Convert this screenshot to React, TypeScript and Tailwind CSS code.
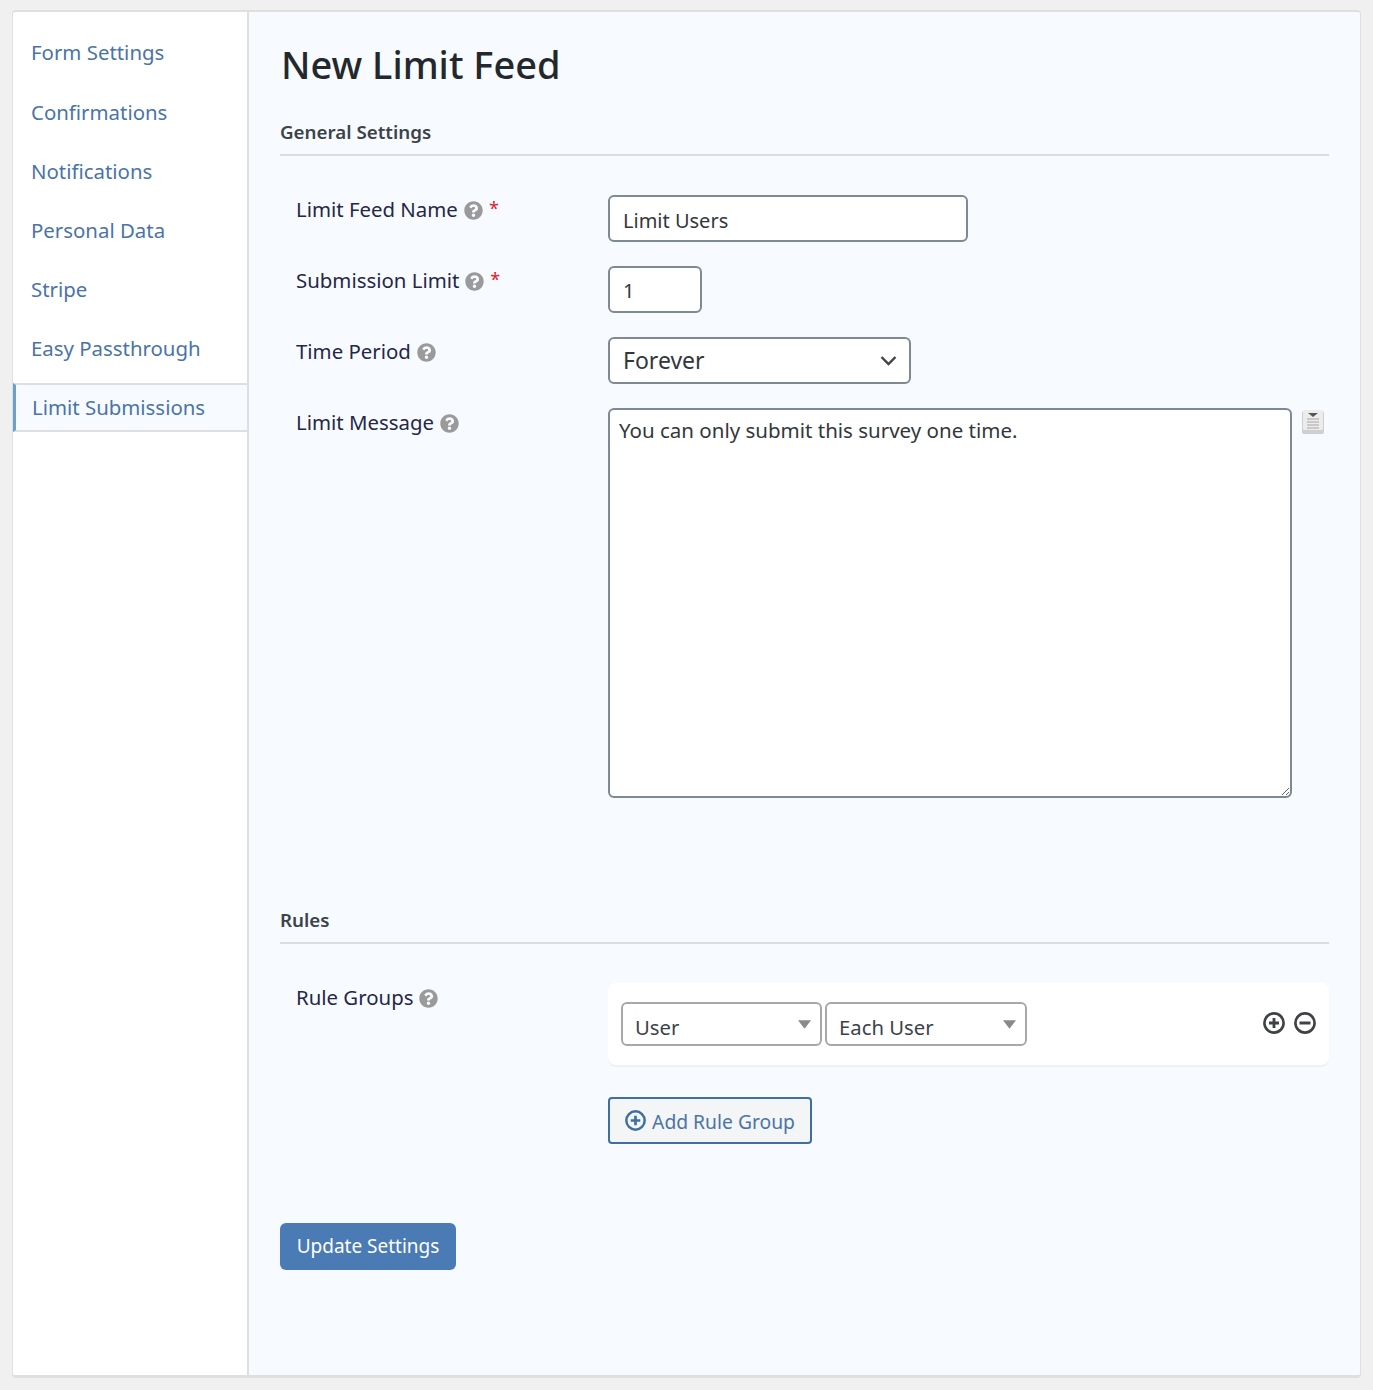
import React from "react";
import { FaQuestionCircle } from "react-icons/fa";

const font = "[font-family:'Noto_Sans','Open_Sans',sans-serif]";

const navItems = ["Form Settings", "Confirmations", "Notifications", "Personal Data", "Stripe", "Easy Passthrough"];

function Label({ text, required }: { text: string; required?: boolean }) {
  return (
    <div className="w-[328px] shrink-0 pl-4 flex items-start text-[20.4px] leading-[28px] text-[#242748]">
      <span>{text}</span>
      <FaQuestionCircle className="ml-[6px] mt-[6px] w-[19px] h-[19px] text-[#9a9a9a]" />
      {required && <span className="ml-[6px] -mt-[1px] text-[18px] text-[#e0202f]">*</span>}
    </div>
  );
}

function PlusCircle({ className }: { className: string }) {
  return (
    <svg viewBox="0 0 22 22" className={className} fill="none" stroke="currentColor">
      <circle cx="11" cy="11" r="9.6" strokeWidth="2.6" />
      <path d="M11 6v10M6 11h10" strokeWidth="2.8" />
    </svg>
  );
}

function MinusCircle({ className }: { className: string }) {
  return (
    <svg viewBox="0 0 22 22" className={className} fill="none" stroke="currentColor">
      <circle cx="11" cy="11" r="9.6" strokeWidth="2.6" />
      <path d="M5.5 11h11" strokeWidth="3" />
    </svg>
  );
}

function RuleSelect({ value, className }: { value: string; className: string }) {
  return (
    <div className={`relative h-[44px] ${className}`}>
      <select
        value={value}
        onChange={() => {}}
        className="w-full h-full appearance-none bg-white border-2 border-[#a8a8a8] rounded-[6px] pl-[12px] pt-[6px] text-[20.3px] text-[#3c434a] outline-none"
      >
        <option>{value}</option>
      </select>
      <svg viewBox="0 0 12 8" className="absolute right-[11px] top-[18px] w-[13px] h-[9px] text-[#8a8a8a]" fill="currentColor">
        <path d="M0 0h12L6 8z" />
      </svg>
    </div>
  );
}

export default function App() {
  return (
    <div className={`min-h-[1390px] bg-[#f0f0f0] pt-[10px] pl-[12px] pr-[12px] pb-[12px] ${font}`}>
      <div className="flex h-[1368px] rounded-[4px] border-t-2 border-b-[3px] border-x border-[#dfdfdf] overflow-hidden">
        <nav className="w-[234px] shrink-0 bg-white text-[20.4px] text-[#4a74a8]">
          {navItems.map((t) => (
            <div key={t} className="mt-[12px] first:mt-[17px] h-[47.2px] flex items-center pl-[18px] leading-none">
              {t}
            </div>
          ))}
          <div className="mt-[11px] h-[49px] flex items-center pl-[16px] border-y-2 border-[#dfdfdf] border-l-[3px] border-l-[#6aa0cb] bg-[#f7fbff]">
            Limit Submissions
          </div>
        </nav>
        <main className="flex-1 border-l-2 border-[#dfdfdf] bg-[#f7fbff] pl-[31px] pr-[31px] pt-[23px]">
          <h1 className="pl-[1px] text-[38px] leading-[58px] font-medium text-[#23282d]">New Limit Feed</h1>

          <h2 className="mt-[25px] text-[18.75px] leading-[28px] font-semibold text-[#3c434a]">General Settings</h2>
          <div className="mt-[8px] h-[2px] bg-[#dcdcde]" />

          <div className="mt-[39px] flex">
            <Label text="Limit Feed Name" required />
            <input
              readOnly
              value="Limit Users"
              className="w-[360px] h-[47px] bg-white border-2 border-[#7e8993] rounded-[6px] px-[13px] pt-[3px] text-[20px] text-[#32373c] outline-none"
            />
          </div>
          <div className="mt-[24px] flex">
            <Label text="Submission Limit" required />
            <input
              readOnly
              value="1"
              className="w-[94px] h-[47px] bg-white border-2 border-[#7e8993] rounded-[6px] px-[13px] pt-[2px] text-[20px] text-[#32373c] outline-none"
            />
          </div>
          <div className="mt-[24px] flex">
            <Label text="Time Period" />
            <div className="relative w-[303px] h-[47px]">
              <select
                value="Forever"
                onChange={() => {}}
                className="w-full h-full appearance-none bg-white border-2 border-[#7e8993] rounded-[6px] px-[13px] text-[23px] text-[#32373c] outline-none"
              >
                <option>Forever</option>
              </select>
              <svg viewBox="0 0 16 10" className="absolute right-[14px] top-[19px] w-[17px] h-[10px] text-[#444]" fill="none" stroke="currentColor" strokeWidth="2.4">
                <path d="M1 1l7 7 7-7" />
              </svg>
            </div>
          </div>
          <div className="mt-[24px] flex">
            <Label text="Limit Message" />
            <textarea
              readOnly
              value="You can only submit this survey one time."
              className="block w-[684px] h-[390px] bg-white border-2 border-[#7e8993] rounded-[6px] px-[9px] py-[2px] text-[20.5px] leading-[36px] text-[#32373c] outline-none"
            />
            <svg viewBox="0 0 22 24" className="ml-[10px] mt-[2px] w-[22px] h-[24px] shrink-0">
              <rect x="0" y="1" width="22" height="23" rx="2" fill="#cfcfcf" />
              <rect x="1" y="0" width="20" height="20" rx="1.5" fill="#ececec" />
              <path d="M6 3h10l-5 4z" fill="#555" />
              <path d="M5 9h12M5 12h12M5 15h12M5 18h12" stroke="#bdbdbd" strokeWidth="1.4" />
            </svg>
          </div>

          <h2 className="mt-[108px] text-[18.75px] leading-[28px] font-semibold text-[#3c434a]">Rules</h2>
          <div className="mt-[8px] h-[2px] bg-[#dcdcde]" />

          <div className="mt-[39px] flex">
            <Label text="Rule Groups" />
            <div className="flex-1">
              <div className="h-[82px] bg-white rounded-[8px] shadow-[0_2px_1px_#eef0f2] pl-[13px] pr-[13px] pt-[19px] flex items-start">
                <RuleSelect value="User" className="w-[201px]" />
                <RuleSelect value="Each User" className="ml-[3px] w-[202px]" />
                <div className="ml-auto mt-[10px] flex gap-[9px] text-[#3f4144]">
                  <PlusCircle className="w-[22px] h-[22px]" />
                  <MinusCircle className="w-[22px] h-[22px]" />
                </div>
              </div>
              <button className="mt-[32px] w-[204px] h-[47px] flex items-center justify-center gap-[6px] bg-[#f3f5f6] border-2 border-[#3e6fa0] rounded-[4px] text-[19.3px] text-[#4a74a8]">
                <PlusCircle className="w-[21px] h-[21px] text-[#3e6fa0]" />
                <span className="pt-[3px]">Add Rule Group</span>
              </button>
            </div>
          </div>

          <button className="mt-[79px] block w-[176px] h-[47px] bg-[#4a7bb5] rounded-[6px] text-[19px] text-white">
            Update Settings
          </button>
        </main>
      </div>
    </div>
  );
}
